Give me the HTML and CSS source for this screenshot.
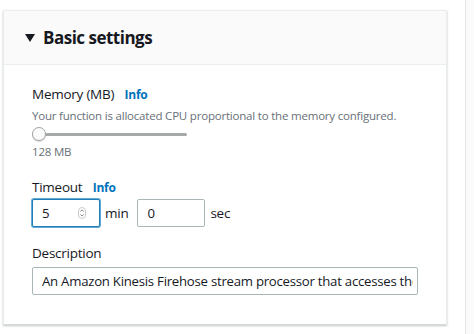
FILE: index.html
```html
<!DOCTYPE html>
<html>
<head>
<meta charset="utf-8">
<link rel="stylesheet" href="styles.css">
</head>
<body>
<div class="page">
  <div class="main">
    <section class="card">
      <header class="card-head">
        <span class="caret"></span>
        <h2 class="title">Basic settings</h2>
      </header>
      <div class="card-body">
        <div class="field">
          <div class="label">Memory (MB) <a class="info">Info</a></div>
          <div class="hint">Your function is allocated CPU proportional to the memory configured.</div>
          <div class="slider">
            <span class="thumb"></span>
            <span class="track"></span>
          </div>
          <div class="value">128 MB</div>
        </div>
        <div class="field timeout">
          <div class="label">Timeout <a class="info">Info</a></div>
          <div class="time-row">
            <div class="input focus">
              <span class="input-text">5</span>
              <svg class="spin" width="8" height="12" viewBox="0 0 8 12">
                <rect x="0.5" y="0.5" width="7" height="11" rx="3.5" fill="none" stroke="#c9cccc"/>
                <path d="M2.3 4.6 L4 2.9 L5.7 4.6" fill="none" stroke="#777" stroke-width="0.9"/>
                <path d="M2.3 7.4 L4 9.1 L5.7 7.4" fill="none" stroke="#777" stroke-width="0.9"/>
              </svg>
            </div>
            <span class="unit">min</span>
            <div class="input">
              <span class="input-text">0</span>
            </div>
            <span class="unit">sec</span>
          </div>
        </div>
        <div class="field desc">
          <div class="label">Description</div>
          <div class="input wide">
            <span class="input-text">An Amazon Kinesis Firehose stream processor that accesses the records</span>
          </div>
        </div>
      </div>
    </section>
  </div>
  <aside class="side"></aside>
</div>
</body>
</html>
```
FILE: styles.css
```css
html, body {
  margin: 0;
  padding: 0;
  background: #ffffff;
}
body {
  font-family: "Open Sans", "Noto Sans", sans-serif;
  color: #16191f;
  width: 474px;
  height: 334px;
  overflow: hidden;
}
.page {
  display: flex;
  height: 334px;
}
.main {
  width: 465px;
  padding: 10px 0 0 3px;
  box-sizing: border-box;
}
.side {
  flex: 1;
  border-left: 1px solid #e3e5e5;
  background: #fbfbfb;
}
.card {
  width: 444px;
  border: 1px solid #eaeded;
  border-bottom-color: #d5d9d9;
  box-shadow: 0 1px 2px rgba(0, 28, 36, 0.25);
  background: #ffffff;
  box-sizing: border-box;
}
.card-head {
  display: flex;
  align-items: center;
  height: 54px;
  padding-left: 21px;
  background: #fafafa;
  border-bottom: 1px solid #eaeded;
  box-sizing: border-box;
}
.caret {
  width: 0;
  height: 0;
  border-left: 5px solid transparent;
  border-right: 5px solid transparent;
  border-top: 8px solid #16191f;
  margin-right: 8px;
  margin-top: 1px;
}
.title {
  margin: 0;
  font-size: 17px;
  font-weight: 700;
  letter-spacing: -0.5px;
  line-height: 22px;
}
.card-body {
  padding: 20px 0 29px 28px;
}
.label {
  font-size: 13.5px;
  line-height: 18px;
  letter-spacing: -0.25px;
  color: #16191f;
}
.info {
  color: #0073bb;
  font-size: 12px;
  font-weight: 700;
  letter-spacing: -0.2px;
  margin-left: 7px;
}
.hint {
  font-size: 11.5px;
  line-height: 16px;
  letter-spacing: -0.2px;
  color: #687078;
  margin-top: 4px;
}
.slider {
  position: relative;
  display: flex;
  align-items: center;
  height: 14px;
  margin-top: 3px;
  width: 155px;
}
.track {
  flex: 1;
  height: 3px;
  background: #a5abab;
  border-radius: 2px;
  margin-left: -1px;
}
.thumb {
  width: 12px;
  height: 12px;
  border-radius: 50%;
  background: #fbfbfb;
  border: 1px solid #a0a5a5;
  box-shadow: 0 1px 1px rgba(0,0,0,0.15);
  position: relative;
  z-index: 1;
}
.value {
  font-size: 11.5px;
  line-height: 16px;
  letter-spacing: -0.2px;
  color: #687078;
  margin-top: 3px;
}
.timeout {
  margin-top: 18px;
}
.time-row {
  display: flex;
  align-items: center;
  margin-top: 2px;
}
.input {
  display: flex;
  align-items: center;
  width: 68px;
  height: 28px;
  border: 1px solid #aab7b8;
  border-radius: 2px;
  padding: 0 9px;
  box-sizing: border-box;
  background: #fff;
  overflow: hidden;
}
.input.focus {
  border-color: #1d7fb5;
  box-shadow: 0 0 0 1px #66a9d3;
}
.input-text {
  flex: 1;
  font-size: 13.2px;
  line-height: 18px;
  letter-spacing: -0.25px;
  white-space: nowrap;
  overflow: hidden;
  color: #16191f;
}
.spin {
  margin-right: 4px;
  flex: none;
}
.unit {
  font-size: 13.5px;
  letter-spacing: -0.25px;
  margin: 0 9px 0 5px;
}
.desc {
  margin-top: 17px;
}
.input.wide {
  width: 386px;
  margin-top: 5px;
  padding-right: 4px;
}
.input.wide .input-text {
  text-overflow: clip;
}
```
